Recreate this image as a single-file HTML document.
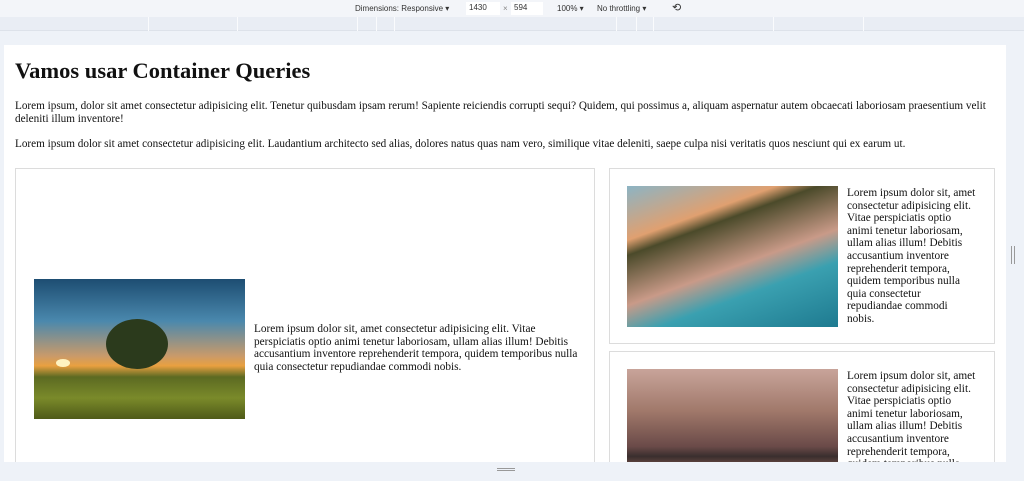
<!DOCTYPE html>
<html><head><meta charset="utf-8"><style>
*{margin:0;padding:0;box-sizing:border-box}
html,body{width:1024px;height:481px;overflow:hidden}
body{background:#eef2f8;font-family:"Liberation Serif",serif;color:#111;position:relative}
.top{position:absolute;left:0;top:0;width:1024px;height:17px;background:#f3f5f9;font-family:"Liberation Sans",sans-serif;font-size:8px;color:#333}
.top span{position:absolute;top:4px}
.inp{background:#fff;height:13px;top:2px!important;padding:1px 3px}
.ruler{position:absolute;left:0;top:17px;width:1024px;height:14px;background:#e9edf4;border-bottom:1px solid #dde2ea}
.ruler i{position:absolute;top:0;height:14px;border-left:1px solid #fafbfd}
.page{position:absolute;left:4px;top:45px;width:1002px;height:417px;background:#fff;overflow:hidden}
h1{position:absolute;left:11px;top:13px;font-size:22.5px;font-weight:bold;white-space:nowrap}
p.t{position:absolute;left:11px;font-size:11.2px;line-height:12.5px;width:982px}
.card{position:absolute;border:1px solid #dcdcdc;background:#fff}
.img{position:absolute}
.tx{position:absolute;font-size:11.3px;line-height:12.6px}
.bot{position:absolute;left:0;top:462px;width:1024px;height:19px;background:#eef2f8}
</style></head><body>
<div class="top">
<span style="left:355px">Dimensions: Responsive ▾</span>
<span class="inp" style="left:466px;width:34px">1430</span>
<span style="left:503px;color:#888">×</span>
<span class="inp" style="left:511px;width:32px">594</span>
<span style="left:557px">100% ▾</span>
<span style="left:597px">No throttling ▾</span>
<span style="left:672px;font-size:11px;top:1px">⟲</span>
</div>
<div class="ruler"><i style="left:148px"></i><i style="left:237px"></i><i style="left:357px"></i><i style="left:376px"></i><i style="left:394px"></i><i style="left:616px"></i><i style="left:636px"></i><i style="left:653px"></i><i style="left:773px"></i><i style="left:863px"></i></div>
<div class="page">
<h1>Vamos usar Container Queries</h1>
<p class="t" style="top:55px">Lorem ipsum, dolor sit amet consectetur adipisicing elit. Tenetur quibusdam ipsam rerum! Sapiente reiciendis corrupti sequi? Quidem, qui possimus a, aliquam aspernatur autem obcaecati laboriosam praesentium velit deleniti illum inventore!</p>
<p class="t" style="top:93px">Lorem ipsum dolor sit amet consectetur adipisicing elit. Laudantium architecto sed alias, dolores natus quas nam vero, similique vitae deleniti, saepe culpa nisi veritatis quos nesciunt qui ex earum ut.</p>
<div class="card" style="left:11px;top:123px;width:580px;height:294px;border-bottom:none">
<div class="img" style="left:18px;top:110px;width:211px;height:140px;background:linear-gradient(180deg,#1d4d72 0%,#4a88ad 30%,#c99a6a 55%,#e9a040 62%,#5c6a22 70%,#7a8a2a 85%,#4f5a18 100%)"><div style="position:absolute;left:72px;top:40px;width:62px;height:50px;border-radius:50%;background:#2b3a1c"></div><div style="position:absolute;left:22px;top:80px;width:14px;height:8px;border-radius:50%;background:#fff3c0"></div></div>
<div class="tx" style="left:238px;top:154px;width:330px">Lorem ipsum dolor sit, amet consectetur adipisicing elit. Vitae perspiciatis optio animi tenetur laboriosam, ullam alias illum! Debitis accusantium inventore reprehenderit tempora, quidem temporibus nulla quia consectetur repudiandae commodi nobis.</div>
</div>
<div class="card" style="left:605px;top:123px;width:386px;height:176px">
<div class="img" style="left:17px;top:17px;width:211px;height:141px;background:linear-gradient(160deg,#8cb4c4 0%,#e0a070 25%,#4b4a2a 32%,#c99a88 55%,#3aa0b0 70%,#1e7a90 100%)"></div>
<div class="tx" style="left:237px;top:18px;width:129px">Lorem ipsum dolor sit, amet consectetur adipisicing elit. Vitae perspiciatis optio animi tenetur laboriosam, ullam alias illum! Debitis accusantium inventore reprehenderit tempora, quidem temporibus nulla quia consectetur repudiandae commodi nobis.</div>
</div>
<div class="card" style="left:605px;top:306px;width:386px;height:111px;border-bottom:none;overflow:hidden">
<div class="img" style="left:17px;top:17px;width:211px;height:141px;background:linear-gradient(180deg,#c8a49a 0%,#a0786a 30%,#6a4a48 55%,#3a2e2e 62%,#9a6a5a 75%,#5a3a38 100%)"></div>
<div class="tx" style="left:237px;top:18px;width:129px">Lorem ipsum dolor sit, amet consectetur adipisicing elit. Vitae perspiciatis optio animi tenetur laboriosam, ullam alias illum! Debitis accusantium inventore reprehenderit tempora, quidem temporibus nulla</div>
</div>
</div>
<div class="bot"><div style="position:absolute;left:497px;top:6px;width:18px;height:3px;border-top:1px solid #999;border-bottom:1px solid #999"></div></div>
<div style="position:absolute;left:1011px;top:246px;width:4px;height:18px;border-left:1px solid #999;border-right:1px solid #999"></div>
</body></html>
